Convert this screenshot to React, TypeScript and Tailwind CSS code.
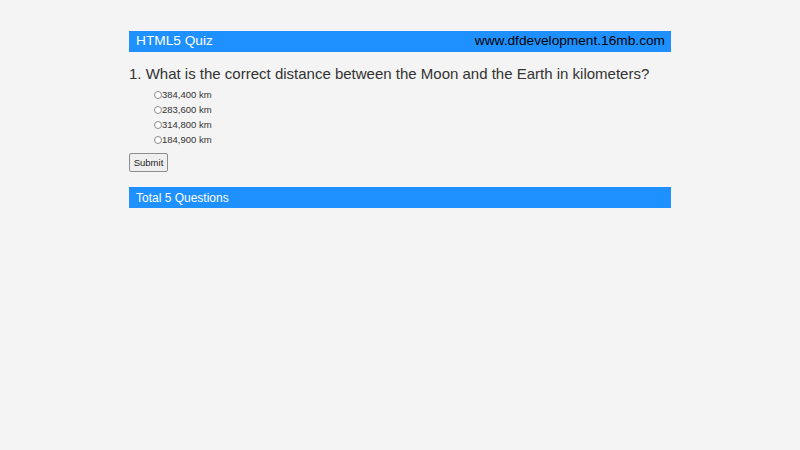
const options = ['384,400 km', '283,600 km', '314,800 km', '184,900 km'];

export default function App() {
  return (
    <div className="min-h-[450px] w-full bg-[#f4f4f4] font-['Liberation_Sans',Arial,sans-serif] text-[#333]">
      <div className="mx-auto w-[542px] pt-[31px]">
        <div className="flex h-[21px] items-center justify-between bg-[#1e90ff] pl-[7px] pr-[6px] text-[13.7px]">
          <span className="text-white">HTML5 Quiz</span>
          <span className="text-black">www.dfdevelopment.16mb.com</span>
        </div>

        <h2 className="mt-[12px] text-[15px] leading-[20px]">
          1. What is the correct distance between the Moon and the Earth in kilometers?
        </h2>

        <div className="mt-[3px] flex flex-col pl-[25px]">
          {options.map((opt) => (
            <label key={opt} className="flex h-[15px] items-center text-[9.5px] leading-[15px]">
              <input
                type="radio"
                name="q1"
                className="m-0 h-[8px] w-[8px] appearance-none rounded-full border border-[#8d8d8d] bg-white"
              />
              <span>{opt}</span>
            </label>
          ))}
        </div>

        <button className="mt-[6px] block h-[19px] w-[39px] rounded-[2px] border border-[#8d8d8d] bg-[#efefef] text-[9.5px] leading-none text-[#222]">
          Submit
        </button>

        <div className="mt-[15px] flex h-[21px] items-center bg-[#1e90ff] pl-[7px] text-[12px] text-white">
          Total 5 Questions
        </div>
      </div>
    </div>
  );
}
